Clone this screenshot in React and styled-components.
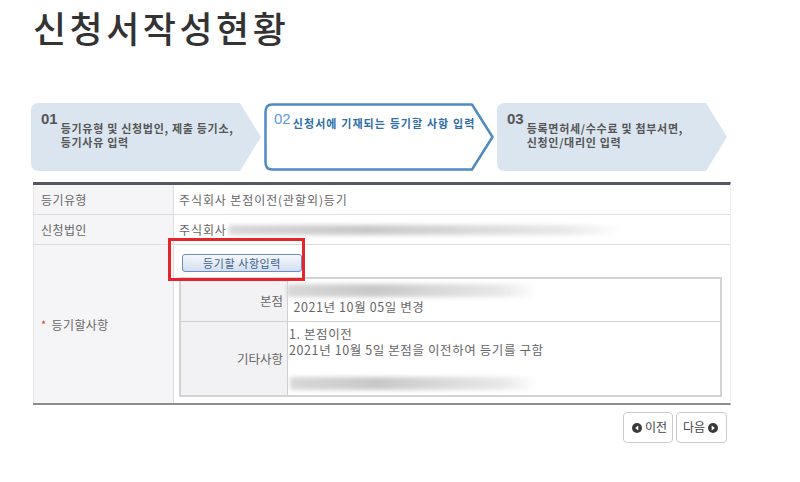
import React from 'react'
import styled, { createGlobalStyle } from 'styled-components'

const GlobalStyle = createGlobalStyle`
  body {
    margin: 0;
    background: #fff;
    font-family: "Noto Sans CJK KR", "Noto Sans", sans-serif;
  }
`

const Page = styled.div`
  width: 800px;
  height: 482px;
  padding: 9px 0 0 33px;
  box-sizing: border-box;
  overflow: hidden;
`

const Title = styled.h1`
  margin: 0;
  font-size: 36px;
  line-height: 36px;
  font-weight: 500;
  letter-spacing: 3.5px;
  color: #333;
`

const Steps = styled.div`
  display: flex;
  gap: 2px;
  margin: 58px 0 0 -2px;
`

const StepBox = styled.div`
  position: relative;
  width: 231px;
  height: 68px;
  box-sizing: border-box;
  padding: 8px 10px;
  display: flex;
  align-items: flex-start;
`

const StepShape = styled.svg`
  position: absolute;
  left: 0;
  top: 0;
  width: 100%;
  height: 100%;
`

const StepNum = styled.span`
  position: relative;
  font-family: "Liberation Sans", Arial, sans-serif;
  font-size: 15px;
  line-height: 15px;
  font-weight: ${p => (p.$active ? 400 : 700)};
  color: ${p => (p.$active ? '#5b9bd5' : '#555')};
`

const StepText = styled.div`
  position: relative;
  margin: ${p => (p.$active ? '5px 0 0 2px' : '10px 0 0 3px')};
  font-size: 11px;
  line-height: 14px;
  font-weight: 700;
  letter-spacing: ${p => (p.$active ? '1.1px' : '0.7px')};
  color: ${p => (p.$active ? '#2f6ea6' : '#555')};
`

const Table = styled.div`
  width: 698px;
  margin-top: 11px;
  border-top: 3px solid #55585f;
  border-bottom: 2px solid #8c8c8c;
  border-right: 1px solid #eee;
  box-sizing: border-box;
`

const Row = styled.div`
  display: flex;
  height: ${p => p.$h}px;
  border-bottom: ${p => (p.$last ? 'none' : '1px solid #ddd')};
`

const Label = styled.div`
  width: 132px;
  flex: none;
  padding-left: 7px;
  display: flex;
  align-items: center;
  background: #f5f5f7;
  border-left: 1px solid #e6e6e6;
  border-right: 1px solid #ddd;
  font-size: 12px;
  letter-spacing: 0.4px;
  color: #666;
`

const Star = styled.span`
  color: #e03b3b;
  margin-right: 5px;
  font-size: 11px;
`

const Value = styled.div`
  flex: 1;
  display: flex;
  align-items: center;
  padding-left: 5px;
  font-size: 12px;
  letter-spacing: 0.9px;
  color: #666;
`

const DetailCell = styled.div`
  flex: 1;
  position: relative;
  padding: 9px 8px 6px 5px;
`

const InputButton = styled.button`
  display: block;
  margin-left: 3px;
  width: 120px;
  height: 18px;
  padding: 0;
  border: 1px solid #6d8dbd;
  border-radius: 3px;
  background: linear-gradient(#f5f8fc, #d3deee);
  color: #40628f;
  font-family: inherit;
  font-size: 11px;
  line-height: 16px;
  letter-spacing: 0.6px;
`

const Highlight = styled.div`
  position: absolute;
  left: -6px;
  top: -7px;
  width: 137px;
  height: 43px;
  border: 3px solid #e3262b;
  box-sizing: border-box;
  pointer-events: none;
`

const InnerTable = styled.div`
  margin-top: 5px;
  border: 2px solid #d3d3d3;
`

const InnerRow = styled.div`
  display: flex;
  height: ${p => p.$h}px;
  border-bottom: ${p => (p.$last ? 'none' : '1px solid #d0d0d0')};
`

const InnerLabel = styled.div`
  width: 102px;
  flex: none;
  padding-right: 4px;
  display: flex;
  align-items: center;
  justify-content: flex-end;
  background: #f2f2f4;
  border-right: 1px solid #d0d0d0;
  font-size: 12.5px;
  color: #666;
`

const InnerValue = styled.div`
  flex: 1;
  padding: ${p => p.$pad || '4px 3px'};
  font-size: 12.5px;
  line-height: 16px;
  letter-spacing: 0.6px;
  color: #666;
`

const Blur = styled.span`
  display: ${p => (p.$inline ? 'inline-block' : 'block')};
  width: ${p => p.$w}px;
  height: ${p => p.$h || 11}px;
  margin: ${p => p.$m || '0'};
  vertical-align: middle;
  background: linear-gradient(90deg, #d8d8d8, #c8c8c8 35%, #dcdcdc 65%, #e8e8e8 85%, rgba(240,240,240,0));
  filter: blur(2px);
`

const Nav = styled.div`
  width: 694px;
  display: flex;
  justify-content: flex-end;
  gap: 3px;
  margin-top: 7px;
`

const NavButton = styled.button`
  height: 31px;
  width: ${p => p.$w}px;
  box-sizing: border-box;
  padding: 0 0 3px ${p => p.$pl}px;
  border: 1px solid #ccc;
  border-radius: 4px;
  background: #fff;
  display: flex;
  align-items: center;
  gap: 3px;
  font-family: inherit;
  font-size: 12px;
  color: #444;
`

const NavIcon = styled.svg`
  width: 10px;
  height: 10px;
  margin-top: 4px;
`

const shape = 'M8,0 H209 L230,34 L209,68 H8 Q0,68 0,60 V8 Q0,0 8,0 Z'
const shapeActive = 'M8,1.5 H208 L228.5,34 L208,66.5 H8 Q1.5,66.5 1.5,59 V9 Q1.5,1.5 8,1.5 Z'

function Step({ num, active, children }) {
  return (
    <StepBox>
      <StepShape viewBox="0 0 231 68" preserveAspectRatio="none">
        {active ? (
          <path d={shapeActive} fill="#fff" stroke="#4f8bc0" strokeWidth="2.5" strokeLinejoin="round" />
        ) : (
          <path d={shape} fill="#dbe5ef" />
        )}
      </StepShape>
      <StepNum $active={active}>{num}</StepNum>
      <StepText $active={active}>{children}</StepText>
    </StepBox>
  )
}

function Arrow({ dir }) {
  return (
    <NavIcon viewBox="0 0 10 10">
      <circle cx="5" cy="5" r="5" fill="#3a3a3a" />
      {dir === 'left'
        ? <path d="M6.3,2.6 L3.2,5 L6.3,7.4 Z" fill="#fff" />
        : <path d="M3.7,2.6 L6.8,5 L3.7,7.4 Z" fill="#fff" />}
    </NavIcon>
  )
}

export default function App() {
  return (
    <Page>
      <GlobalStyle />
      <Title>신청서작성현황</Title>

      <Steps>
        <Step num="01">등기유형 및 신청법인, 제출 등기소,<br />등기사유 입력</Step>
        <Step num="02" active>신청서에 기재되는 등기할 사항 입력</Step>
        <Step num="03">등록면허세/수수료 및 첨부서면,<br />신청인/대리인 입력</Step>
      </Steps>

      <Table>
        <Row $h={29}>
          <Label>등기유형</Label>
          <Value>주식회사 본점이전(관할외)등기</Value>
        </Row>
        <Row $h={29}>
          <Label>신청법인</Label>
          <Value>
            주식회사
            <Blur $inline $w={393} $h={10} $m="0 0 0 2px" />
          </Value>
        </Row>
        <Row $h={158} $last>
          <Label><Star>*</Star>등기할사항</Label>
          <DetailCell>
            <InputButton>등기할 사항입력</InputButton>
            <Highlight />
            <InnerTable>
              <InnerRow $h={42}>
                <InnerLabel>본점</InnerLabel>
                <InnerValue $pad="4px 2px">
                  <Blur $w={250} $h={13} $m="1px 0 2px -3px" />
                  &nbsp;2021년 10월 05일 변경
                </InnerValue>
              </InnerRow>
              <InnerRow $h={73} $last>
                <InnerLabel>기타사항</InnerLabel>
                <InnerValue $pad="4px 1px">
                  1. 본점이전<br />
                  2021년 10월 5일 본점을 이전하여 등기를 구함
                  <Blur $w={248} $h={13} $m="19px 0 0 1px" />
                </InnerValue>
              </InnerRow>
            </InnerTable>
          </DetailCell>
        </Row>
      </Table>

      <Nav>
        <NavButton $w={50} $pl={8}><Arrow dir="left" />이전</NavButton>
        <NavButton $w={51} $pl={6}>다음<Arrow dir="right" /></NavButton>
      </Nav>
    </Page>
  )
}
